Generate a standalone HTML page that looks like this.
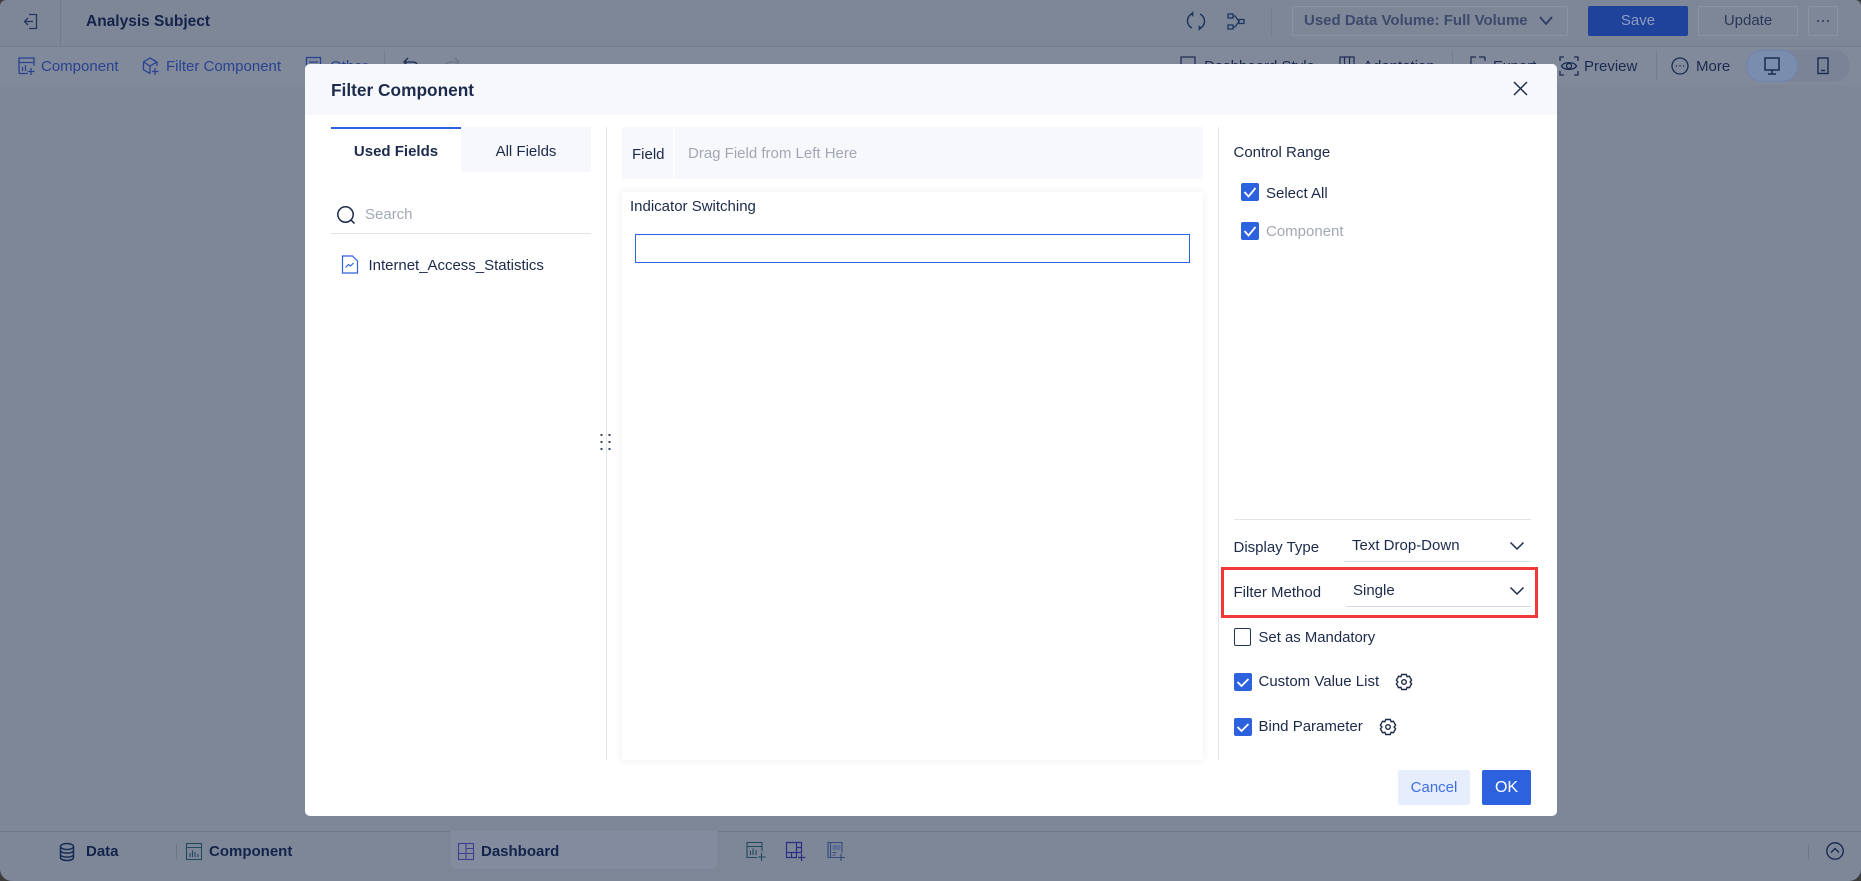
<!DOCTYPE html>
<html lang="en"><head><meta charset="utf-8"><title>Filter Component</title>
<style>
*{box-sizing:border-box}
html,body{margin:0;padding:0;width:1861px;height:881px;overflow:hidden;background:#3c3c3c;font-family:"Liberation Sans",Arial,sans-serif}
#app{position:absolute;left:0;top:0;width:1861px;height:881px;background:#7e8798;border-radius:6px 6px 12px 12px;overflow:hidden}
.a{position:absolute}
.t{position:absolute;white-space:nowrap;line-height:20px;height:20px;font-size:15px;color:#1c2a4a;margin-top:1px}
.b{font-weight:bold}
.blue{color:#2a4290}
.dk{color:#1b2b50}
svg{position:absolute;overflow:visible;fill:none}
.gr{color:#a3a8b5}
.cb{position:absolute;width:18px;height:18px;background:#2d62de;border-radius:2px}
.cb svg{left:0;top:0}
</style></head><body>
<div id="app">
<!-- top bar -->
<div class="a" style="left:0;top:0;width:1861px;height:47px;border-bottom:1px solid #737c8e"></div>
<div class="a" style="left:60px;top:0;width:1px;height:46px;background:#737c8e"></div>
<svg style="left:20px;top:10px" width="22" height="22" viewBox="0 0 22 22" stroke="#24365c" stroke-width="1.300"><path d="M9 4.500h7.500v14H9"/><path d="M13 11.500H5M8 8l-3.500 3.500L8 15"/></svg>
<div class="t b" style="left:86px;top:11px;font-size:15.500px;color:#13234a">Analysis Subject</div>

<svg style="left:1186px;top:11px" width="20" height="20" viewBox="0 0 20 20" stroke="#1d3660" stroke-width="1.500"><path d="M7 2.200A8 8 0 0 0 6 17M13 17.800A8 8 0 0 0 14 3"/><path d="M7 1v4l-2-2zM13 19v-4l2 2z" fill="#1d3660" stroke-width=".8"/></svg>
<svg style="left:1227px;top:12px" width="20" height="20" viewBox="0 0 20 20" stroke="#1d3660" stroke-width="1.300"><rect x="1" y="2" width="5" height="4"/><rect x="1" y="13" width="5" height="4"/><rect x="12" y="7.500" width="5" height="4"/><path d="M6 4h2l4 5.500M6 15h2l4-5.500"/></svg>
<div class="a" style="left:1271px;top:7px;width:1px;height:29px;background:#757e90"></div>
<div class="a" style="left:1292px;top:6px;width:276px;height:30px;border:1px solid #8a93a4;border-radius:2px"></div>
<div class="t b" style="left:1304px;top:10px;color:#3d4a6b;font-size:15px">Used Data Volume: Full Volume</div>
<svg style="left:1538px;top:15px" width="16" height="12" viewBox="0 0 16 12" stroke="#2d3d61" stroke-width="1.800"><path d="M2 2l6 7 6-7"/></svg>
<div class="a" style="left:1588px;top:6px;width:100px;height:30px;background:#1f429a;border-radius:2px"></div>
<div class="t" style="left:1588px;top:10px;width:100px;text-align:center;color:#8e9cc2">Save</div>
<div class="a" style="left:1698px;top:6px;width:100px;height:30px;border:1px solid #8a93a4;border-radius:2px"></div>
<div class="t" style="left:1698px;top:10px;width:100px;text-align:center;color:#2a3858">Update</div>
<div class="a" style="left:1808px;top:6px;width:30px;height:30px;border:1px solid #8a93a4;border-radius:2px"></div>
<svg style="left:1808px;top:6px" width="30" height="30"><circle cx="10" cy="15" r="1" fill="#2a3858"/><circle cx="15" cy="15" r="1" fill="#2a3858"/><circle cx="20" cy="15" r="1" fill="#2a3858"/></svg>

<!-- second row -->
<div class="a" style="left:0;top:47px;width:1861px;height:38px;background:#818a9b"></div>
<svg style="left:18px;top:56px" width="18" height="20" viewBox="0 0 18 20" stroke="#2a4290" stroke-width="1.300"><path d="M1 17.500V2h15v8M1 6.500h15M1 17.500h9M4.500 15v-4M7.500 15V9M13 12v7M9.500 15.500h7"/></svg>
<div class="t blue" style="left:41px;top:56px">Component</div>
<svg style="left:142px;top:56px" width="18" height="20" viewBox="0 0 18 20" stroke="#2a4290" stroke-width="1.300"><path d="M8 17.500l-6.500-3.700V6L8 2l7 4v4M1.500 6L8 10l7-4M8 10v7.500M13 12v7M10 15.500h6.500"/></svg>
<div class="t blue" style="left:166px;top:56px;font-size:15px">Filter Component</div>
<svg style="left:305px;top:56px" width="18" height="20" viewBox="0 0 18 20" stroke="#2a4290" stroke-width="1.300"><rect x="1.500" y="1.500" width="14" height="16"/><path d="M4 6h9M4 10h9"/></svg>
<div class="t blue" style="left:330px;top:56px">Other</div>
<div class="a" style="left:384px;top:50px;width:1px;height:30px;background:#757e90"></div>
<svg style="left:402px;top:56px" width="18" height="14" viewBox="0 0 18 14" stroke="#1b2b50" stroke-width="1.300"><path d="M6 2L2 6l4 4M2 6h9a5 5 0 0 1 5 5"/></svg>
<svg style="left:443px;top:56px" width="18" height="14" viewBox="0 0 18 14" stroke="#6c7488" stroke-width="1.300"><path d="M12 2l4 4-4 4M16 6H7a5 5 0 0 0-5 5"/></svg>
<svg style="left:1180px;top:56px" width="16" height="14" viewBox="0 0 16 14" stroke="#1b2b50" stroke-width="1.200"><rect x="1" y="1" width="14" height="13"/></svg>
<div class="t dk" style="left:1204px;top:56px">Dashboard Style</div>
<svg style="left:1339px;top:56px" width="16" height="14" viewBox="0 0 16 14" stroke="#1b2b50" stroke-width="1.200"><rect x="1" y="1" width="14" height="13"/><path d="M5.500 1v7M10.500 1v7"/></svg>
<div class="t dk" style="left:1363px;top:56px">Adaptation</div>
<div class="a" style="left:1452px;top:50px;width:1px;height:30px;background:#757e90"></div>
<svg style="left:1470px;top:56px" width="16" height="14" viewBox="0 0 16 14" stroke="#1b2b50" stroke-width="1.200"><path d="M6 1H1v13h5M9 1h6M15 1v4"/></svg>
<div class="t dk" style="left:1493px;top:56px">Export</div>
<svg style="left:1559px;top:55px" width="20" height="22" viewBox="0 0 20 22" stroke="#1b2b50" stroke-width="1.300"><path d="M1 6V2h4M15 2h4v4M19 16v4h-4M5 20H1v-4"/><path d="M2.500 11C5 6.500 15 6.500 17.500 11 15 15.500 5 15.500 2.500 11z"/><circle cx="10" cy="11" r="2.500"/></svg>
<div class="t dk" style="left:1584px;top:56px">Preview</div>
<div class="a" style="left:1656px;top:50px;width:1px;height:30px;background:#757e90"></div>
<svg style="left:1671px;top:57px" width="18" height="18" viewBox="0 0 18 18" stroke="#1b2b50" stroke-width="1.300"><circle cx="9" cy="9" r="8"/><circle cx="5.500" cy="9" r=".7" fill="#1b2b50" stroke="none"/><circle cx="9" cy="9" r=".7" fill="#1b2b50" stroke="none"/><circle cx="12.500" cy="9" r=".7" fill="#1b2b50" stroke="none"/></svg>
<div class="t dk" style="left:1696px;top:56px">More</div>
<div class="a" style="left:1746px;top:50px;width:104px;height:32px;background:#7a8496;border-radius:16px"></div>
<div class="a" style="left:1746px;top:50px;width:52px;height:32px;background:#7b8dae;border:1px solid #6f84ad;border-radius:16px"></div>
<svg style="left:1763px;top:57px" width="18" height="19" viewBox="0 0 18 19" stroke="#1b2b50" stroke-width="1.500"><rect x="2" y="1" width="14" height="12"/><path d="M9 13v4M5 17h8"/></svg>
<svg style="left:1816px;top:57px" width="14" height="18" viewBox="0 0 14 18" stroke="#1b2b50" stroke-width="1.400"><rect x="2" y="1" width="10" height="15.500"/><path d="M5 13.500h4"/></svg>

<!-- bottom -->
<div class="a" style="left:0;top:831px;width:1861px;height:1px;background:#6e778a"></div>
<svg style="left:58px;top:842px" width="18" height="20" viewBox="0 0 18 20" stroke="#172a55" stroke-width="1.500"><ellipse cx="9" cy="4.500" rx="6.500" ry="3"/><path d="M2.500 4.500v11c0 4 13 4 13 0v-11M2.500 8.500c0 3.500 13 3.500 13 0M2.500 12.500c0 3.500 13 3.500 13 0"/></svg>
<div class="t b" style="left:86px;top:841px;color:#13234a">Data</div>
<div class="a" style="left:176px;top:844px;width:1px;height:15px;background:#6c7589"></div>
<svg style="left:186px;top:843px" width="16" height="17" viewBox="0 0 16 17" stroke="#23495c" stroke-width="1.100"><rect x=".5" y=".5" width="15" height="16"/><path d="M.5 4.500h15M4 14v-4M6.500 14V7.500M9 14v-5M12 14v-3"/></svg>
<div class="t b" style="left:209px;top:841px;color:#13234a">Component</div>
<div class="a" style="left:449px;top:831px;width:270px;height:39px;background:#838c9e;border:1px solid #7a8395;border-top:0;border-radius:0 0 7px 7px"></div>
<svg style="left:458px;top:843px" width="16" height="17" viewBox="0 0 16 17" stroke="#3c418f" stroke-width="1.100"><rect x=".5" y=".5" width="15" height="16"/><path d="M.5 10.500h15M8 .5v16M8 5.500h7.500"/></svg>
<div class="t b" style="left:481px;top:841px;color:#13234a">Dashboard</div>
<svg style="left:746px;top:842px" width="20" height="20" viewBox="0 0 20 20" stroke="#23495c" stroke-width="1.100"><path d="M11 15.500H1V.5h15v9M1 4.500h15M4.500 13V9M7 13V6.500M10 13V8M15.500 11v8M12 15h7.500" /></svg>
<svg style="left:786px;top:842px" width="20" height="20" viewBox="0 0 20 20" stroke="#2b2f83" stroke-width="1.200"><path d="M11 15.500H.5V.5h15v11M.5 10.500h15M10.500.5v15M10.500 5.500h5M5.500 10.500v5M15.500 12v7M12 15.500h7.500"/></svg>
<svg style="left:827px;top:842px" width="20" height="20" viewBox="0 0 20 20" stroke="#34497e" stroke-width="1.100"><path d="M11 15.500H1V.5h14v10M3.500.5v15"/><rect x="5.500" y="3" width="8" height="5" fill="#5f6f95" stroke="none"/><path d="M5.500 10.500h4M5.500 13h3M14 11.500v7.500M10.500 15.500h7.500"/></svg>
<div class="a" style="left:1808px;top:845px;width:1px;height:14px;background:#6c7589"></div>
<svg style="left:1826px;top:842px" width="18" height="18" viewBox="0 0 18 18" stroke="#13234a" stroke-width="1.300"><circle cx="9" cy="9" r="8.200"/><path d="M5 10.500L9 6.500l4 4"/></svg>

<!-- dialog -->
<div class="a" style="left:305px;top:64px;width:1252px;height:752px;background:#fff;border-radius:5px;overflow:hidden">
  <div class="a" style="left:0;top:0;width:1252px;height:51px;background:#f7f8fc"></div>
</div>
<div class="t b" style="left:331px;top:79px;font-size:17.300px;color:#1d2c4d">Filter Component</div>
<svg style="left:1512px;top:80px" width="18" height="18" viewBox="0 0 18 18" stroke="#1d2c4d" stroke-width="1.500"><path d="M2 2l13 13M15 2L2 15"/></svg>

<!-- left column -->
<div class="a" style="left:331px;top:127px;width:130px;height:45px;background:#fff;border-top:2px solid #2d62de"></div>
<div class="a" style="left:461px;top:127px;width:130px;height:45px;background:#f7f8fc"></div>
<div class="t b" style="left:331px;top:141px;width:130px;text-align:center;color:#1d2c4d">Used Fields</div>
<div class="t" style="left:461px;top:141px;width:130px;text-align:center">All Fields</div>
<svg style="left:336px;top:205px" width="20" height="20" viewBox="0 0 20 20" stroke="#1c2a4a" stroke-width="1.500"><circle cx="9.500" cy="9.500" r="7.700"/><path d="M15 15l3.500 3.500"/></svg>
<div class="t gr" style="left:365px;top:204px">Search</div>
<div class="a" style="left:331px;top:233px;width:260px;height:1px;background:#dfe1e6"></div>
<svg style="left:341px;top:255px" width="18" height="19" viewBox="0 0 18 19" stroke="#2d62de" stroke-width="1.200"><path d="M1.500 1h10l5 5v12h-15z"/><path d="M4.500 12.500l3-3 2 1.500 3-3"/></svg>
<div class="t" style="left:368.500px;top:255px;letter-spacing:-.02px">Internet_Access_Statistics</div>

<div class="a" style="left:606px;top:127px;width:1px;height:633px;background:#e4e6ec"></div>
<svg style="left:598px;top:432px" width="16" height="20"><g fill="#3a4766"><rect x="2.500" y="2" width="2" height="2"/><rect x="10.500" y="2" width="2" height="2"/><rect x="2.500" y="9" width="2" height="2"/><rect x="10.500" y="9" width="2" height="2"/><rect x="2.500" y="16" width="2" height="2"/><rect x="10.500" y="16" width="2" height="2"/></g></svg>

<!-- middle column -->
<div class="a" style="left:622px;top:127px;width:581px;height:52px;background:#f7f8fc"></div>
<div class="a" style="left:673px;top:127px;width:2px;height:52px;background:#fff"></div>
<div class="t" style="left:632px;top:144px">Field</div>
<div class="t gr" style="left:688px;top:143px;color:#a2a7b4">Drag Field from Left Here</div>
<div class="a" style="left:622px;top:192px;width:581px;height:568px;background:#fff;box-shadow:0 0 8px rgba(40,50,80,.09)"></div>
<div class="t" style="left:630px;top:196px">Indicator Switching</div>
<div class="a" style="left:635px;top:234px;width:555px;height:29px;border:1px solid #2d62de"></div>
<div class="a" style="left:1218px;top:127px;width:1px;height:633px;background:#e4e6ec"></div>

<!-- right column -->
<div class="t" style="left:1233.500px;top:142px">Control Range</div>
<div class="cb" style="left:1241px;top:183px"><svg width="18" height="18" viewBox="0 0 18 18" stroke="#fff" stroke-width="1.800"><path d="M3.500 9l4 4.500 7-8.500"/></svg></div>
<div class="t" style="left:1266px;top:183px">Select All</div>
<div class="cb" style="left:1241px;top:222px"><svg width="18" height="18" viewBox="0 0 18 18" stroke="#fff" stroke-width="1.800"><path d="M3.500 9l4 4.500 7-8.500"/></svg></div>
<div class="t gr" style="left:1266px;top:221px">Component</div>
<div class="a" style="left:1234px;top:519px;width:297px;height:1px;background:#e2e4ea"></div>

<div class="t" style="left:1233.500px;top:537px">Display Type</div>
<div class="t" style="left:1352px;top:535px">Text Drop-Down</div>
<div class="a" style="left:1344px;top:561px;width:187px;height:1px;background:#dcdee5"></div>
<svg style="left:1509px;top:541px" width="16" height="10" viewBox="0 0 16 10" stroke="#1c2a4a" stroke-width="1.500"><path d="M1.500 1.500L8 8l6.500-6.500"/></svg>
<div class="a" style="left:1221px;top:567px;width:317px;height:51px;border:3px solid #f03a3a"></div>
<div class="t" style="left:1233.500px;top:582px">Filter Method</div>
<div class="t" style="left:1353px;top:580px">Single</div>
<div class="a" style="left:1346px;top:606px;width:185px;height:1px;background:#d5d8e2"></div>
<svg style="left:1509px;top:586px" width="16" height="10" viewBox="0 0 16 10" stroke="#1c2a4a" stroke-width="1.500"><path d="M1.500 1.500L8 8l6.500-6.500"/></svg>

<div class="a" style="left:1234px;top:628px;width:17px;height:18px;border:1px solid #263454;border-radius:2px"></div>
<div class="t" style="left:1258.500px;top:627px;font-size:14.900px">Set as Mandatory</div>
<div class="cb" style="left:1234px;top:673px"><svg width="18" height="18" viewBox="0 0 18 18" stroke="#fff" stroke-width="1.800"><path d="M3.500 9l4 4 7-7"/></svg></div>
<div class="t" style="left:1258.500px;top:671px">Custom Value List</div>
<svg style="left:1395px;top:673px" width="18" height="18" viewBox="0 0 18 18" stroke="#1c2a4a" stroke-width="1.400"><path d="M6.700 1.500h4.600l.8 2.200 2.300-.4 2.200 3.900-1.500 1.800 1.500 1.800-2.200 3.900-2.300-.4-.8 2.200H6.700l-.8-2.200-2.300.4L1.400 10.800l1.500-1.800-1.500-1.800 2.200-3.900 2.300.4z"/><circle cx="9" cy="9" r="2.300"/></svg>
<div class="cb" style="left:1234px;top:718px"><svg width="18" height="18" viewBox="0 0 18 18" stroke="#fff" stroke-width="1.800"><path d="M3.500 9l4 4 7-7"/></svg></div>
<div class="t" style="left:1258.500px;top:716px">Bind Parameter</div>
<svg style="left:1379px;top:718px" width="18" height="18" viewBox="0 0 18 18" stroke="#1c2a4a" stroke-width="1.400"><path d="M6.700 1.500h4.600l.8 2.200 2.300-.4 2.200 3.900-1.500 1.800 1.500 1.800-2.200 3.900-2.300-.4-.8 2.200H6.700l-.8-2.200-2.300.4L1.400 10.800l1.500-1.800-1.500-1.800 2.200-3.900 2.300.4z"/><circle cx="9" cy="9" r="2.300"/></svg>

<div class="a" style="left:1398px;top:770px;width:72px;height:35px;background:#e6eefd;border-radius:2px"></div>
<div class="t" style="left:1398px;top:777px;width:72px;text-align:center;color:#3f6fe0">Cancel</div>
<div class="a" style="left:1482px;top:770px;width:49px;height:35px;background:#2d62de;border-radius:2px"></div>
<div class="t" style="left:1482px;top:777px;width:49px;text-align:center;color:#fff;font-size:16px">OK</div>
</div>
</body></html>
